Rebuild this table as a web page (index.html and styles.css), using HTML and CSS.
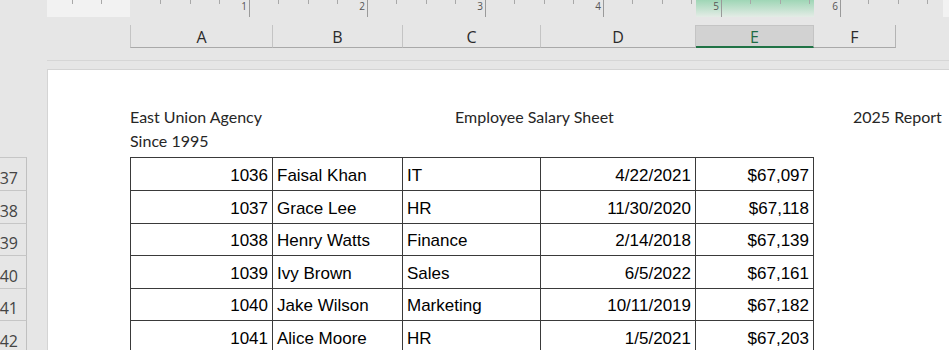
FILE: index.html
```html
<!DOCTYPE html>
<html lang="en">
<head>
<meta charset="utf-8">
<title>Employee Salary Sheet</title>
<link rel="stylesheet" href="styles.css">
</head>
<body>
<div class="ruler">
  <svg class="ruler-svg" width="949" height="17" viewBox="0 0 949 17">
    <defs>
      <linearGradient id="sel" x1="0" y1="0" x2="0" y2="1">
        <stop offset="0" stop-color="#9fd6b6"/>
        <stop offset="1" stop-color="#e4ece6"/>
      </linearGradient>
    </defs>
    <rect x="0" y="0" width="949" height="17" fill="#e6e6e6"/>
    <rect x="47" y="0" width="83" height="17" fill="#f2f2f2"/>
    <rect x="943" y="0" width="6" height="17" fill="#f2f2f2"/>
    <rect x="696" y="0" width="118" height="17" fill="url(#sel)"/>
    <g stroke="#a8a8a8" stroke-width="1">
      <line x1="72.5" y1="0" x2="72.5" y2="4"/>
      <line x1="101.5" y1="0" x2="101.5" y2="4"/>
      <line x1="160.5" y1="0" x2="160.5" y2="4"/>
      <line x1="190.5" y1="0" x2="190.5" y2="4"/>
      <line x1="219.5" y1="0" x2="219.5" y2="4"/>
      <line x1="278.5" y1="0" x2="278.5" y2="4"/>
      <line x1="308.5" y1="0" x2="308.5" y2="4"/>
      <line x1="337.5" y1="0" x2="337.5" y2="4"/>
      <line x1="396.5" y1="0" x2="396.5" y2="4"/>
      <line x1="426.5" y1="0" x2="426.5" y2="4"/>
      <line x1="455.5" y1="0" x2="455.5" y2="4"/>
      <line x1="514.5" y1="0" x2="514.5" y2="4"/>
      <line x1="544.5" y1="0" x2="544.5" y2="4"/>
      <line x1="573.5" y1="0" x2="573.5" y2="4"/>
      <line x1="632.5" y1="0" x2="632.5" y2="4"/>
      <line x1="662.5" y1="0" x2="662.5" y2="4"/>
      <line x1="691.5" y1="0" x2="691.5" y2="4"/>
      <line x1="750.5" y1="0" x2="750.5" y2="4"/>
      <line x1="780.5" y1="0" x2="780.5" y2="4"/>
      <line x1="809.5" y1="0" x2="809.5" y2="4"/>
      <line x1="868.5" y1="0" x2="868.5" y2="4"/>
      <line x1="898.5" y1="0" x2="898.5" y2="4"/>
      <line x1="927.5" y1="0" x2="927.5" y2="4"/>
    </g>
    <g stroke="#9a9a9a" stroke-width="1">
      <line x1="249.5" y1="0" x2="249.5" y2="17"/>
      <line x1="367.5" y1="0" x2="367.5" y2="17"/>
      <line x1="485.5" y1="0" x2="485.5" y2="17"/>
      <line x1="603.5" y1="0" x2="603.5" y2="17"/>
      <line x1="721.5" y1="0" x2="721.5" y2="17"/>
      <line x1="840.5" y1="0" x2="840.5" y2="17"/>
    </g>
    <g class="ruler-num" text-anchor="end">
      <text x="247" y="10">1</text>
      <text x="365" y="10">2</text>
      <text x="483" y="10">3</text>
      <text x="601" y="10">4</text>
      <text x="719" y="10">5</text>
      <text x="838" y="10">6</text>
    </g>
  </svg>
</div>

<div class="colbar">
  <div class="colheads">
    <div class="colhead col-a">A</div>
    <div class="colhead col-b">B</div>
    <div class="colhead col-c">C</div>
    <div class="colhead col-d">D</div>
    <div class="colhead col-e selected">E</div>
    <div class="colhead col-f">F</div>
  </div>
</div>

<div class="band"></div>

<div class="main">
  <div class="rowheads">
    <div class="rowhead h33">37</div>
    <div class="rowhead h33">38</div>
    <div class="rowhead h32">39</div>
    <div class="rowhead h33">40</div>
    <div class="rowhead h32">41</div>
    <div class="rowhead h33">42</div>
  </div>
  <div class="page">
    <div class="titles">
      <div class="t-agency">East Union Agency</div>
      <div class="t-sheet">Employee Salary Sheet</div>
      <div class="t-report">2025 Report</div>
      <div class="t-since">Since 1995</div>
    </div>
    <div class="grid">
      <div class="cell num">1036</div><div class="cell">Faisal Khan</div><div class="cell">IT</div><div class="cell num">4/22/2021</div><div class="cell num">$67,097</div>
      <div class="cell num">1037</div><div class="cell">Grace Lee</div><div class="cell">HR</div><div class="cell num">11/30/2020</div><div class="cell num">$67,118</div>
      <div class="cell num">1038</div><div class="cell">Henry Watts</div><div class="cell">Finance</div><div class="cell num">2/14/2018</div><div class="cell num">$67,139</div>
      <div class="cell num">1039</div><div class="cell">Ivy Brown</div><div class="cell">Sales</div><div class="cell num">6/5/2022</div><div class="cell num">$67,161</div>
      <div class="cell num">1040</div><div class="cell">Jake Wilson</div><div class="cell">Marketing</div><div class="cell num">10/11/2019</div><div class="cell num">$67,182</div>
      <div class="cell num">1041</div><div class="cell">Alice Moore</div><div class="cell">HR</div><div class="cell num">1/5/2021</div><div class="cell num">$67,203</div>
    </div>
  </div>
</div>
</body>
</html>
```

FILE: styles.css
```css
* {
  box-sizing: border-box;
}

html, body {
  margin: 0;
  padding: 0;
  width: 949px;
  height: 350px;
  overflow: hidden;
  background: #e6e6e6;
}

body {
  font-family: "Liberation Sans", Arial, sans-serif;
}

.ruler {
  height: 17px;
}

.ruler-svg {
  display: block;
}

.ruler-num {
  font-family: "Open Sans", sans-serif;
  font-size: 10px;
  fill: #555555;
}

.colbar {
  height: 31px;
  padding-top: 8px;
}

.colheads {
  display: flex;
  margin-left: 130px;
  height: 23px;
}

.colhead {
  height: 23px;
  border-right: 1px solid #c4c4c4;
  border-bottom: 1px solid #a9a9a9;
  font-family: "Open Sans", sans-serif;
  font-size: 16px;
  color: #2b2b2b;
  display: flex;
  align-items: center;
  justify-content: center;
  padding-top: 1px;
}

.col-a { width: 143px; border-left: 1px solid #c4c4c4; }
.col-b { width: 130px; }
.col-c { width: 138px; }
.col-d { width: 155px; }
.col-e { width: 118px; }
.col-f { width: 82px; border-right-color: #b4b4b4; }

.colhead.selected {
  background: #d2d2d2;
  color: #1f6b45;
  border-top: 1px solid #c4c4c4;
  border-bottom: 2px solid #217346;
}

.band {
  margin-top: 12px;
  margin-left: 47px;
  border-top: 1px solid #d6d6d6;
  height: 9px;
}

.main {
  display: flex;
  height: 281px;
}

.rowheads {
  width: 47px;
  padding-top: 88px;
}

.rowhead {
  width: 27px;
  border-top: 1px solid #c6c6c6;
  border-right: 1px solid #c0c0c0;
  font-family: "Open Sans", sans-serif;
  font-size: 16px;
  color: #444444;
  display: flex;
  align-items: flex-end;
  justify-content: flex-end;
  padding-right: 8px;
  padding-bottom: 1px;
  line-height: 22px;
}

.h33 { height: 33px; }
.h32 { height: 32px; }

.page {
  flex: 1;
  background: #ffffff;
  border-top: 1px solid #d4d4d4;
  border-left: 1px solid #d4d4d4;
  padding-top: 35px;
  padding-left: 82px;
}

.titles {
  display: grid;
  grid-template-columns: 143px 130px 138px 155px 118px 1fr;
  grid-template-rows: 24px 24px;
  font-family: Lato, "Open Sans", sans-serif;
  font-size: 16px;
  line-height: 24px;
  color: #262626;
  white-space: nowrap;
}

.t-agency { grid-column: 1; grid-row: 1; }
.t-sheet { grid-column: 3 / span 2; grid-row: 1; padding-left: 52px; }
.t-report { grid-column: 6; grid-row: 1; padding-left: 39px; }
.t-since { grid-column: 1; grid-row: 2; }

.grid {
  display: grid;
  margin-top: 4px;
  width: 684px;
  grid-template-columns: 142px 130px 138px 155px 118px;
  grid-template-rows: 33px 33px 32px 33px 32px 33px;
  border-left: 1px solid #3a3a3a;
  border-top: 1px solid #3a3a3a;
}

.cell {
  border-right: 1px solid #3a3a3a;
  border-bottom: 1px solid #3a3a3a;
  font-size: 17px;
  color: #000000;
  display: flex;
  align-items: flex-end;
  padding: 0 3px 4px 4px;
  white-space: nowrap;
  overflow: hidden;
}

.cell.num {
  justify-content: flex-end;
  padding-right: 4px;
}
```
